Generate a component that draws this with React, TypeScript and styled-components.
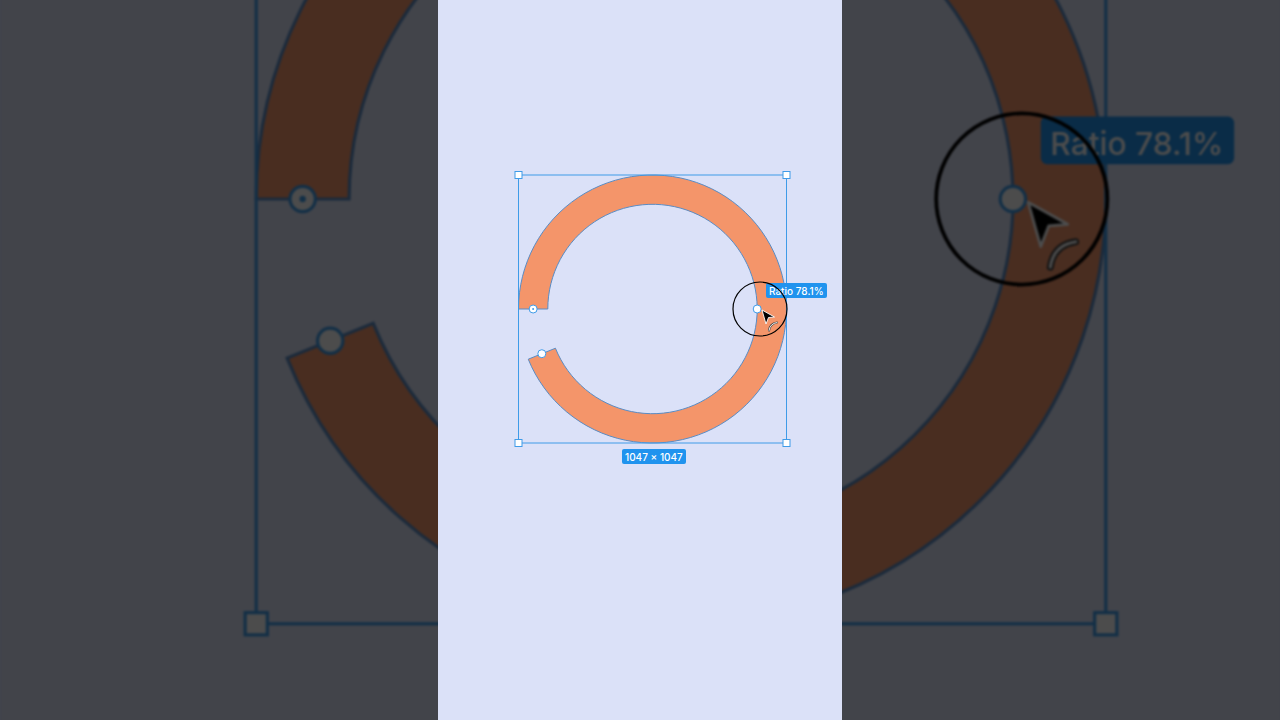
import React from 'react';
import styled, { createGlobalStyle } from 'styled-components';

const canvasWidth = 404;
const canvasHeight = 720;

const lavender = '#dbe1f8';
const ringFill = '#f4956a';
const ringStroke = '#5a8cc4';
const selectBlue = '#3f9be8';
const badgeBlue = '#2093ee';

// ring geometry, canvas coords
const cx = 214.5;
const cy = 309;
const outerR = 134;
const innerR = 104.7; // 78.1% of outer
const endAngle = (158 * Math.PI) / 180;

const pt = (r: number, a: number) => [cx + r * Math.cos(a), cy + r * Math.sin(a)];

const GlobalStyle = createGlobalStyle`
  html, body {
    margin: 0;
    padding: 0;
    overflow: hidden;
    background: #42454d;
  }
`;

const Page = styled.div`
  position: relative;
  width: 1280px;
  height: 720px;
  overflow: hidden;
  background: #42454d;
  display: flex;
  justify-content: center;
`;

const Backdrop = styled.div`
  position: absolute;
  inset: 0;
  display: flex;
  justify-content: center;
  pointer-events: none;
`;

// magnified, dimmed copy of the canvas shown behind the short-form frame
const Zoomed = styled.div`
  transform-origin: ${cx}px ${cy}px;
  transform: translate(28.5px, -110px) scale(3.17);
  filter: brightness(0.3) blur(0.35px);
`;

const Frame = styled.div`
  position: relative;
  z-index: 1;
  width: ${canvasWidth}px;
  height: ${canvasHeight}px;
`;

const CanvasRoot = styled.div`
  position: relative;
  width: ${canvasWidth}px;
  height: ${canvasHeight}px;
  background: ${lavender};
  font-family: Inter, 'Noto Sans', 'Liberation Sans', sans-serif;
`;

const Layer = styled.svg`
  position: absolute;
  left: 0;
  top: 0;
  width: ${canvasWidth}px;
  height: ${canvasHeight}px;
  overflow: visible;
`;

const Badge = styled.div<{ $left: number; $top: number }>`
  position: absolute;
  left: ${p => p.$left}px;
  top: ${p => p.$top}px;
  height: 15px;
  padding: 0 3px;
  display: flex;
  align-items: center;
  background: ${badgeBlue};
  border-radius: 2px;
  color: #fff;
  font-size: 10px;
  font-weight: 500;
  white-space: nowrap;
`;

const Handle = ({ x, y, dot }: { x: number; y: number; dot?: boolean }) => (
  <g>
    <circle cx={x} cy={y} r={4} fill="#fff" stroke={selectBlue} strokeWidth={1} />
    {dot && <circle cx={x} cy={y} r={1} fill={selectBlue} />}
  </g>
);

const Corner = ({ x, y }: { x: number; y: number }) => (
  <rect x={x - 3.5} y={y - 3.5} width={7} height={7} fill="#fff" stroke={selectBlue} strokeWidth={1} />
);

const Canvas = () => {
  const [oex, oey] = pt(outerR, endAngle);
  const [iex, iey] = pt(innerR, endAngle);
  const ring = `M${cx - outerR},${cy} A${outerR},${outerR} 0 1 1 ${oex},${oey} L${iex},${iey} A${innerR},${innerR} 0 1 0 ${cx - innerR},${cy} Z`;
  const [hx, hy] = pt((outerR + innerR) / 2, endAngle);
  const box = { x: cx - outerR, y: cy - outerR, s: outerR * 2 };

  return (
    <CanvasRoot>
      <Layer viewBox={`0 0 ${canvasWidth} ${canvasHeight}`}>
        <path d={ring} fill={ringFill} stroke={ringStroke} strokeWidth={1} />
        <rect x={box.x} y={box.y} width={box.s} height={box.s} fill="none" stroke={selectBlue} strokeWidth={1} />
        <Corner x={box.x} y={box.y} />
        <Corner x={box.x + box.s} y={box.y} />
        <Corner x={box.x} y={box.y + box.s} />
        <Corner x={box.x + box.s} y={box.y + box.s} />
        <Handle x={cx - (outerR + innerR) / 2} y={cy} dot />
        <Handle x={hx} y={hy} />
        <Handle x={cx + innerR} y={cy} />
      </Layer>
      <Badge $left={328} $top={283}>Ratio 78.1%</Badge>
      <Badge $left={184} $top={449}>1047 × 1047</Badge>
      <Layer viewBox={`0 0 ${canvasWidth} ${canvasHeight}`}>
        <circle cx={322} cy={309} r={27} fill="none" stroke="#000" strokeWidth={1.2} />
        <g transform="translate(324 310)">
          <path d="M0,0 L12.5,7 L6.5,7.5 L4,14 Z" fill="#000" stroke="#fff" strokeWidth={0.9} strokeLinejoin="round" />
          <path d="M7,20.5 Q8,13.5 15,12.5" fill="none" stroke="#444" strokeWidth={2.2} strokeLinecap="round" />
          <path d="M7,20.5 Q8,13.5 15,12.5" fill="none" stroke="#fff" strokeWidth={0.9} strokeLinecap="round" />
        </g>
      </Layer>
    </CanvasRoot>
  );
};

export default function App() {
  return (
    <>
      <GlobalStyle />
      <Page>
        <Backdrop>
          <Zoomed>
            <Canvas />
          </Zoomed>
        </Backdrop>
        <Frame>
          <Canvas />
        </Frame>
      </Page>
    </>
  );
}
